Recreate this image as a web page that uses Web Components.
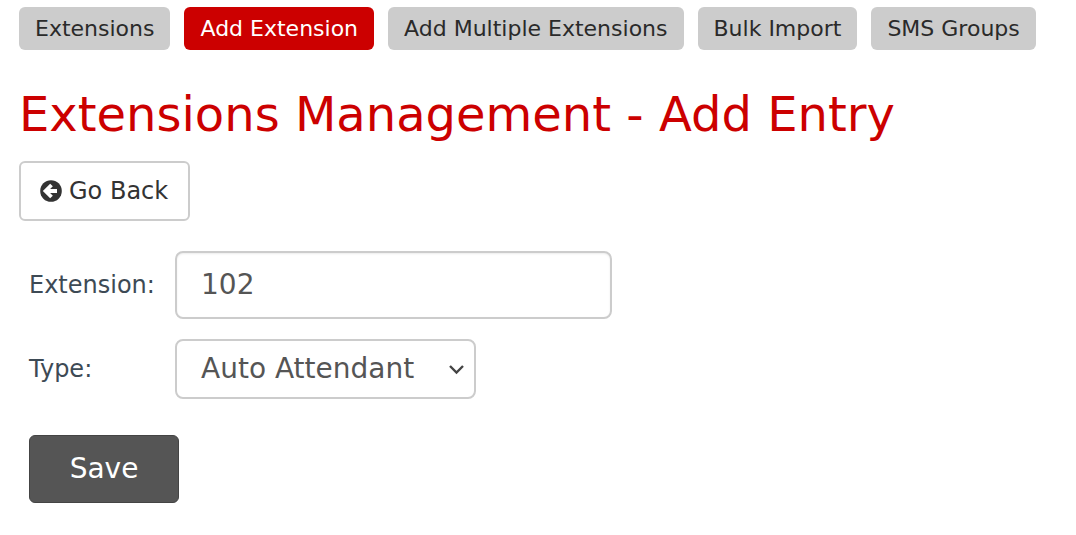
<!DOCTYPE html>
<html><head><meta charset="utf-8"><style>
html,body{margin:0;padding:0;background:#fff;font-family:"DejaVu Sans",sans-serif}
</style></head><body>
<ext-page></ext-page>
<script>
class TabBar extends HTMLElement{constructor(){super();this.attachShadow({mode:'open'}).innerHTML=`<style>
:host{display:flex;gap:14px;padding:7px 0 0 19px}
</style><slot></slot>`}}
class TabItem extends HTMLElement{constructor(){super();this.attachShadow({mode:'open'}).innerHTML=`<style>
:host{display:block;background:#ccc;color:#2a2a2a;font-size:22px;line-height:43px;height:43px;padding:0 16px;border-radius:6px;white-space:nowrap}
:host([active]){background:#c00;color:#fff}
</style><slot></slot>`}}
class BackBtn extends HTMLElement{constructor(){super();this.attachShadow({mode:'open'}).innerHTML=`<style>
:host{display:inline-flex;align-items:center;gap:7px;box-sizing:border-box;height:60px;padding:0 20px 0 20px;border:2px solid #ccc;border-radius:6px;font-size:24px;color:#333;background:#fff}
svg{width:22px;height:22px;display:block;margin-left:-1px}
</style><svg viewBox="0 0 22 22"><circle cx="11" cy="11" r="10.800" fill="#333"/><path d="M11.500 5 5.500 11l6 6M7 11h10" fill="none" stroke="#fff" stroke-width="3.800"/></svg><slot></slot>`}}
class FormRow extends HTMLElement{constructor(){super();this.attachShadow({mode:'open'}).innerHTML=`<style>
:host{display:flex;align-items:center}
.l{width:146px;font-size:24px;color:#3d4a55}
</style><div class="l"><slot name="label"></slot></div><slot></slot>`}}
class TextBox extends HTMLElement{constructor(){super();this.attachShadow({mode:'open'}).innerHTML=`<style>
:host{display:flex;align-items:center;box-sizing:border-box;height:68px;border:2px solid #ccc;border-radius:8px;padding:0 24px 2px;font-size:28px;color:#555;background:#fff;box-shadow:inset 0 1px 2px rgba(0,0,0,.08)}
</style><slot></slot>`}}
class SelectBox extends HTMLElement{constructor(){super();this.attachShadow({mode:'open'}).innerHTML=`<style>
:host{display:flex;align-items:center;justify-content:space-between;box-sizing:border-box;height:60px;border:2px solid #ccc;border-radius:8px;padding:0 9px 2px 24px;font-size:28px;color:#555;background:#fff}
svg{width:18px;height:12px;margin-top:2px}
</style><slot></slot><svg viewBox="0 0 18 12"><path d="M3 3 9.500 9.500 16 3" fill="none" stroke="#444" stroke-width="2.400"/></svg>`}}
class SaveBtn extends HTMLElement{constructor(){super();this.attachShadow({mode:'open'}).innerHTML=`<style>
:host{display:flex;align-items:center;justify-content:center;box-sizing:border-box;width:150px;height:68px;background:#555;border:1px solid #444;border-radius:6px;color:#fff;font-size:28px;padding-bottom:2px}
</style><slot></slot>`}}
class ExtPage extends HTMLElement{constructor(){super();this.attachShadow({mode:'open'}).innerHTML=`<style>
:host{display:block}
h1{margin:0;padding:34px 0 0 19px;font-weight:400;font-size:48px;line-height:60px;color:#c00}
back-btn{margin:17px 0 0 19px}
.form{padding:30px 0 0 29px;display:flex;flex-direction:column}
.t{width:437px}.s{width:301px}
.r2{margin-top:20px}
save-btn{margin-top:36px}
</style>
<tab-bar><tab-item>Extensions</tab-item><tab-item active>Add Extension</tab-item><tab-item>Add Multiple Extensions</tab-item><tab-item>Bulk Import</tab-item><tab-item>SMS Groups</tab-item></tab-bar>
<h1>Extensions Management - Add Entry</h1>
<back-btn>Go Back</back-btn>
<div class="form">
<form-row><span slot="label">Extension:</span><text-box class="t">102</text-box></form-row>
<form-row class="r2"><span slot="label">Type:</span><select-box class="s">Auto Attendant</select-box></form-row>
<save-btn>Save</save-btn>
</div>`}}
for(const [n,c] of Object.entries({'tab-bar':TabBar,'tab-item':TabItem,'back-btn':BackBtn,'form-row':FormRow,'text-box':TextBox,'select-box':SelectBox,'save-btn':SaveBtn,'ext-page':ExtPage}))customElements.define(n,c);
</script></body></html>
